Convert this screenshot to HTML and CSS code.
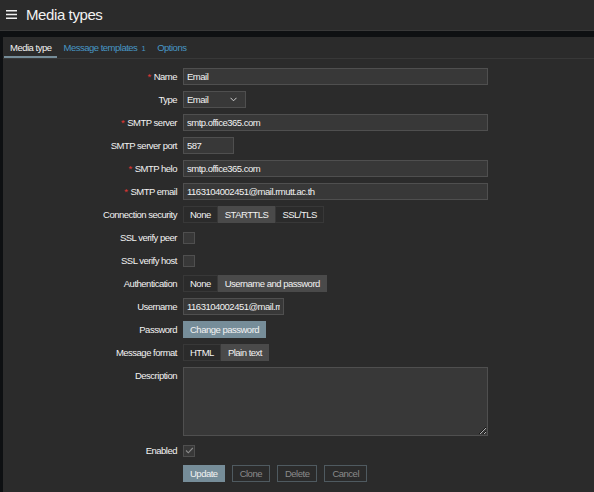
FILE: index.html
```html
<!DOCTYPE html>
<html lang="en">
  <head>
    <meta charset="UTF-8" />
    <title>Media types</title>
    <link rel="stylesheet" href="styles.css">
  </head>
  <body>
    <header class="page-header">
      <span class="menu-icon">
        <svg width="11" height="9" viewBox="0 0 11 9"><path d="M0 0.75h11M0 4.5h11M0 8.25h11" stroke="#f2f2f2" stroke-width="1.5"/></svg>
      </span>
      <h1>Media types</h1>
    </header>

    <div class="panel">
      <ul class="tabs">
        <li class="tab active">Media type</li>
        <li class="tab">Message templates <span class="count">1</span></li>
        <li class="tab">Options</li>
      </ul>

      <div class="form">
        <label class="req">Name</label>
        <div><input class="input w-full" type="text" value="Email"></div>

        <label>Type</label>
        <div>
          <span class="select">Email
            <svg width="7" height="5" viewBox="0 0 7 5"><path d="M0.5 0.8l3 3l3-3" fill="none" stroke="#d0d0d0" stroke-width="1"/></svg>
          </span>
        </div>

        <label class="req">SMTP server</label>
        <div><input class="input w-full" type="text" value="smtp.office365.com"></div>

        <label>SMTP server port</label>
        <div><input class="input w-port" type="text" value="587"></div>

        <label class="req">SMTP helo</label>
        <div><input class="input w-full" type="text" value="smtp.office365.com"></div>

        <label class="req">SMTP email</label>
        <div><input class="input w-full" type="text" value="1163104002451@mail.rmutt.ac.th"></div>

        <label>Connection security</label>
        <div class="segments">
          <span class="seg">None</span><span class="seg on">STARTTLS</span><span class="seg">SSL/TLS</span>
        </div>

        <label>SSL verify peer</label>
        <div><span class="check"></span></div>

        <label>SSL verify host</label>
        <div><span class="check"></span></div>

        <label>Authentication</label>
        <div class="segments">
          <span class="seg">None</span><span class="seg on">Username and password</span>
        </div>

        <label>Username</label>
        <div><input class="input w-user" type="text" value="1163104002451@mail.rmutt.ac.th"></div>

        <label>Password</label>
        <div><button class="btn">Change password</button></div>

        <label>Message format</label>
        <div class="segments">
          <span class="seg">HTML</span><span class="seg on">Plain text</span>
        </div>

        <label class="top">Description</label>
        <div><textarea class="textarea"></textarea></div>

        <label>Enabled</label>
        <div>
          <span class="check">
            <svg width="9" height="7" viewBox="0 0 9 7"><path d="M1 3.5l2.3 2.3l4.5-4.8" fill="none" stroke="#8c8c8c" stroke-width="1.1"/></svg>
          </span>
        </div>

        <span></span>
        <div class="actions">
          <button class="btn">Update</button>
          <button class="btn-alt">Clone</button>
          <button class="btn-alt">Delete</button>
          <button class="btn-alt">Cancel</button>
        </div>
      </div>
    </div>
  </body>
</html>
```

FILE: styles.css
```css
* {
  margin: 0;
  padding: 0;
  box-sizing: border-box;
}

body {
  font-family: "Liberation Sans", Arial, sans-serif;
  font-size: 9.5px;
  letter-spacing: -0.5px;
  color: #f2f2f2;
  background-color: #0e1012;
  height: 492px;
  overflow: hidden;
}

.page-header {
  display: flex;
  align-items: center;
  height: 31px;
  padding: 0 0 2px 6px;
  background-color: #2b2b2b;
  border-bottom: 1px solid #383838;
}

.menu-icon {
  display: flex;
  width: 20px;
}

.page-header h1 {
  font-size: 15px;
  font-weight: normal;
  letter-spacing: -0.4px;
  color: #f2f2f2;
}

.panel {
  margin: 6px 0 0 3px;
  height: 460px;
  background-color: #2b2b2b;
}

/* tabs */
.tabs {
  display: flex;
  list-style: none;
  height: 22px;
  padding-left: 1px;
  border-bottom: 1px solid #383838;
}

.tab {
  padding: 5px 6px 0;
  color: #4796c4;
  height: 21px;
}

.tab.active {
  padding: 5px 6px 0;
  color: #f2f2f2;
  border-bottom: 2px solid #768d99;
}

.count {
  font-size: 7.5px;
  margin-left: 2px;
}

/* form */
.form {
  display: grid;
  grid-template-columns: 174px 1fr;
  column-gap: 6px;
  row-gap: 6px;
  padding-top: 9px;
  align-items: center;
}

.form label {
  text-align: right;
  line-height: 17px;
}

.form label.top {
  align-self: start;
}

.req::before {
  content: "*";
  margin-right: 3px;
  color: #e33734;
}

.input {
  display: block;
  height: 17px;
  padding: 0 3px;
  font: inherit;
  letter-spacing: inherit;
  color: #f2f2f2;
  background-color: #383838;
  border: 1px solid #4f4f4f;
  outline: none;
}

.w-full {
  width: 305px;
}

.w-port {
  width: 51px;
}

.w-user {
  width: 101px;
}

.select {
  display: flex;
  align-items: center;
  justify-content: space-between;
  width: 63px;
  height: 17px;
  padding: 0 8px 0 3px;
  background-color: #383838;
  border: 1px solid #4f4f4f;
}

.segments {
  display: flex;
}

.seg {
  height: 17px;
  line-height: 15px;
  padding: 0 6px;
  background-color: #2b2b2b;
  border: 1px solid #383838;
}

.seg.on {
  background-color: #4a4a4a;
  border-color: #4a4a4a;
}

.check {
  display: flex;
  align-items: center;
  justify-content: center;
  width: 12px;
  height: 12px;
  background-color: #383838;
  border: 1px solid #4f4f4f;
}

.textarea {
  display: block;
  width: 305px;
  height: 69px;
  background-color: #383838;
  border: 1px solid #4f4f4f;
  resize: both;
  outline: none;
}

.btn {
  height: 17px;
  padding: 0 6px;
  font: inherit;
  letter-spacing: inherit;
  color: #f2f2f2;
  background-color: #768d99;
  border: 1px solid #768d99;
}

.actions {
  display: flex;
  gap: 7px;
}

.btn-alt {
  height: 17px;
  padding: 0 7px;
  font: inherit;
  letter-spacing: inherit;
  color: #8a8a8a;
  background-color: transparent;
  border: 1px solid #4f5a60;
}
```
